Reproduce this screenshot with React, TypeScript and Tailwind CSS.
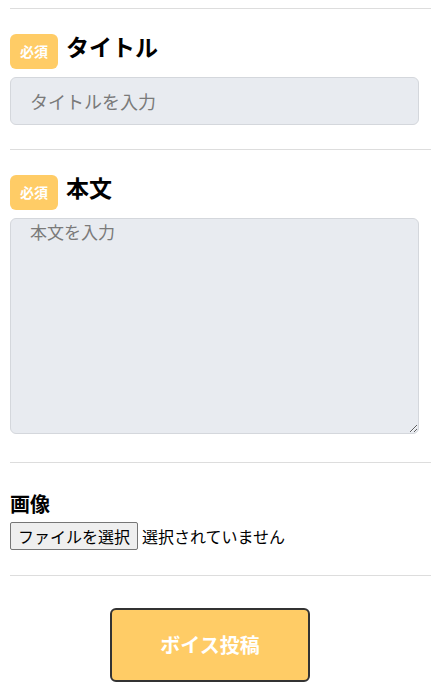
import React from 'react';

const jp = { fontFamily: '"Noto Sans CJK JP", "Noto Sans", sans-serif' };

function RequiredBadge() {
  return (
    <span className="flex h-[35px] w-[48px] items-center justify-center rounded-[6px] bg-[#ffcc66] text-[14px] font-bold text-white">
      必須
    </span>
  );
}

function Divider() {
  return <div className="mr-[-10px] h-px bg-[#dddddd]" />;
}

export default function App() {
  return (
    <div className="min-h-screen bg-white px-[10px] pt-[8px] text-black" style={jp}>
      <Divider />

      {/* タイトル */}
      <div className="pt-[25px]">
        <div className="flex items-start gap-[8px]">
          <RequiredBadge />
          <span className="mt-[1px] text-[23px] font-bold leading-none">タイトル</span>
        </div>
        <input
          type="text"
          placeholder="タイトルを入力"
          className="mt-[8px] block h-[48px] w-[409px] rounded-[6px] border border-[#d4d7dc] bg-[#e8ebf0] px-[19px] text-[18px] placeholder:text-[#7a7a7a] outline-none"
          style={jp}
        />
      </div>

      <div className="mt-[24px]">
        <Divider />
      </div>

      {/* 本文 */}
      <div className="pt-[25px]">
        <div className="flex items-start gap-[8px]">
          <RequiredBadge />
          <span className="mt-[1px] text-[23px] font-bold leading-none">本文</span>
        </div>
        <textarea
          placeholder="本文を入力"
          className="mt-[8px] block h-[216px] w-[409px] rounded-[6px] border border-[#d4d7dc] bg-[#e8ebf0] px-[19px] py-0 text-[17px] placeholder:text-[#7a7a7a] outline-none"
          style={jp}
        />
      </div>

      <div className="mt-[28px]">
        <Divider />
      </div>

      {/* 画像 */}
      <div className="pt-[26px]">
        <div className="text-[20px] font-bold leading-[30px]">画像</div>
        <div className="mt-[3px] flex items-center gap-[4px] text-[16px]">
          <button
            type="button"
            className="h-[28px] rounded-[2px] border border-[#767676] bg-[#efefef] px-[7px] text-[16px] leading-none text-black"
            style={jp}
          >
            ファイルを選択
          </button>
          <span>選択されていません</span>
        </div>
      </div>

      <div className="mt-[25px]">
        <Divider />
      </div>

      <div className="pt-[32px] pb-[10px] pl-[100px]">
        <button
          type="button"
          className="h-[74px] w-[200px] rounded-[6px] border-2 border-[#333333] bg-[#ffcc66] text-[20px] font-bold text-white"
          style={jp}
        >
          ボイス投稿
        </button>
      </div>
    </div>
  );
}
